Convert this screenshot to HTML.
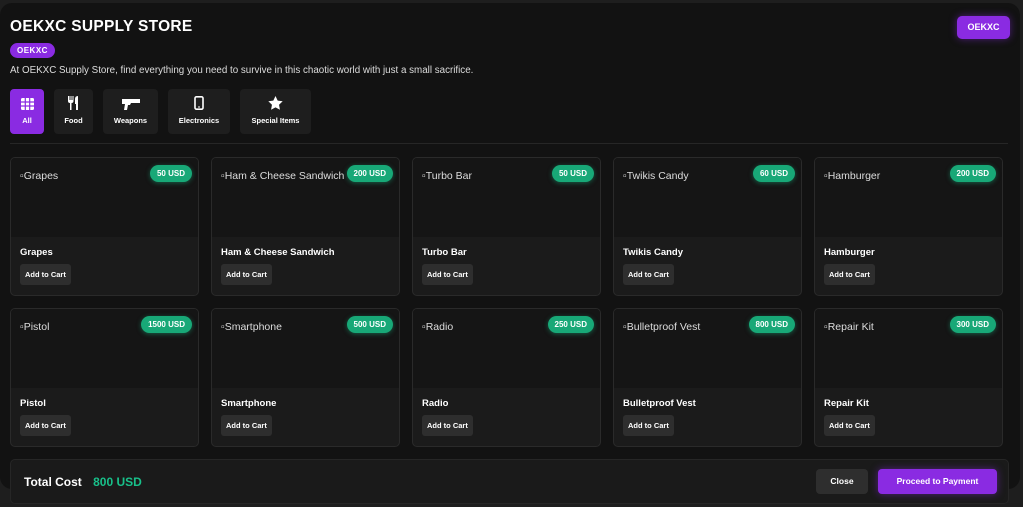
<!DOCTYPE html>
<html><head><meta charset="utf-8"><style>
*{box-sizing:border-box;margin:0;padding:0}
body{width:1023px;height:507px;background:#1e1e1e;font-family:"Liberation Sans",sans-serif;color:#fff;position:relative;overflow:hidden}
.wrap{position:absolute;left:0;top:3px;width:1020px;height:486px;background:#121212;border-radius:12px}
h1{position:absolute;left:10px;top:18px;font-size:15.5px;font-weight:900;letter-spacing:.3px}
.tag{position:absolute;left:10px;top:43px;background:#8a2be2;border-radius:8px;font-size:8px;font-weight:bold;padding:3px 7px;letter-spacing:.5px}
.desc{position:absolute;left:10px;top:65px;font-size:9.8px;color:#ddd}
.top{position:absolute;left:957px;top:16px;width:53px;height:23px;background:#8a2be2;border-radius:5px;font-size:9px;font-weight:bold;text-align:center;line-height:23px;box-shadow:0 0 8px rgba(138,43,226,.5)}
.tabs{position:absolute;top:89px;left:10px;display:flex}
.tab{height:45px;background:#1e1e1e;border-radius:4px;margin-right:10px;font-size:7.5px;font-weight:bold;display:flex;flex-direction:column;align-items:center;justify-content:flex-end;padding-bottom:9px}
.tab svg{margin-bottom:6px}
.tab.on{background:#8a2be2}
hr{position:absolute;left:10px;top:143px;width:998px;border:0;border-top:1px solid #262626}
.card{position:absolute;width:189px;height:139px;border:1px solid #2a2a2a;border-radius:5px;background:#1b1b1b;overflow:hidden}
.img{height:79px;background:#151515;padding:12px 9px;font-size:10.5px;color:#ddd;white-space:nowrap;overflow:hidden}
.price{position:absolute;right:6px;top:7px;background:#18a877;border-radius:9px;font-size:8px;font-weight:bold;padding:4px 7px;box-shadow:0 1px 5px rgba(24,168,119,.5)}
.nm{font-size:9.5px;font-weight:bold;margin:10px 0 0 9px}
.btn{display:inline-block;margin:6px 0 0 9px;background:#2e2e2e;border-radius:3px;font-size:7.5px;font-weight:bold;padding:6px 5px}
.foot{position:absolute;left:10px;top:459px;width:999px;height:45px;background:#1a1a1a;border:1px solid #262626;border-radius:5px}
.tc{position:absolute;left:13px;top:15px;font-size:12px;font-weight:bold}
.tc b{color:#18c08a;margin-left:8px}
.cl{position:absolute;left:805px;top:9px;width:52px;height:25px;background:#2e2e2e;border-radius:4px;font-size:8.5px;font-weight:bold;text-align:center;line-height:25px}
.pp{position:absolute;left:867px;top:9px;width:119px;height:25px;background:#8a2be2;border-radius:4px;font-size:8.5px;font-weight:bold;text-align:center;line-height:25px;box-shadow:0 0 8px rgba(138,43,226,.5)}
</style></head><body>
<div class="wrap"></div>
<h1>OEKXC SUPPLY STORE</h1>
<div class="tag">OEKXC</div>
<div class="desc">At OEKXC Supply Store, find everything you need to survive in this chaotic world with just a small sacrifice.</div>
<div class="top">OEKXC</div>
<div class="tabs">
<div class="tab on" style="width:34px"><svg width="13" height="12" viewBox="0 0 13 12"><rect x="0" y="0" width="13" height="12" rx="1.5" fill="#fff"/><path d="M4.3 0v12M8.7 0v12M0 4h13M0 8h13" stroke="#8a2be2" stroke-width="1.2"/></svg>All</div>
<div class="tab" style="width:39px"><svg width="13" height="14" viewBox="0 0 13 14"><path d="M1 0v5q0 2 2 2v7h1.5V7q2 0 2-2V0H5.5v4H4.5V0h-1v4h-1V0z M9 14V8H8V3q0-3 3-3v14z" fill="#fff"/></svg>Food</div>
<div class="tab" style="width:55px"><svg width="18" height="12" viewBox="0 0 18 12"><path d="M0 1h18v4H9l-1 2H6l-1 5H2l1-6H0z" fill="#fff"/></svg>Weapons</div>
<div class="tab" style="width:62px"><svg width="10" height="14" viewBox="0 0 10 14"><rect x="1" y="0.8" width="8" height="12.4" rx="1.5" fill="none" stroke="#fff" stroke-width="1.6"/><rect x="4" y="10.5" width="2" height="1" fill="#fff"/></svg>Electronics</div>
<div class="tab" style="width:71px"><svg width="15" height="14" viewBox="0 0 24 23"><path d="M12 0l3.6 7.5 8.2 1.1-6 5.7 1.5 8.2L12 18.6 4.7 22.5l1.5-8.2-6-5.7 8.2-1.1z" fill="#fff"/></svg>Special Items</div>
</div>
<hr>
<div class="card" style="left:10px;top:157px"><div class="img">▫Grapes</div><div class="price">50 USD</div><div class="nm">Grapes</div><div class="btn">Add to Cart</div></div>
<div class="card" style="left:211px;top:157px"><div class="img">▫Ham &amp; Cheese Sandwich</div><div class="price">200 USD</div><div class="nm">Ham &amp; Cheese Sandwich</div><div class="btn">Add to Cart</div></div>
<div class="card" style="left:412px;top:157px"><div class="img">▫Turbo Bar</div><div class="price">50 USD</div><div class="nm">Turbo Bar</div><div class="btn">Add to Cart</div></div>
<div class="card" style="left:613px;top:157px"><div class="img">▫Twikis Candy</div><div class="price">60 USD</div><div class="nm">Twikis Candy</div><div class="btn">Add to Cart</div></div>
<div class="card" style="left:814px;top:157px"><div class="img">▫Hamburger</div><div class="price">200 USD</div><div class="nm">Hamburger</div><div class="btn">Add to Cart</div></div>
<div class="card" style="left:10px;top:308px"><div class="img">▫Pistol</div><div class="price">1500 USD</div><div class="nm">Pistol</div><div class="btn">Add to Cart</div></div>
<div class="card" style="left:211px;top:308px"><div class="img">▫Smartphone</div><div class="price">500 USD</div><div class="nm">Smartphone</div><div class="btn">Add to Cart</div></div>
<div class="card" style="left:412px;top:308px"><div class="img">▫Radio</div><div class="price">250 USD</div><div class="nm">Radio</div><div class="btn">Add to Cart</div></div>
<div class="card" style="left:613px;top:308px"><div class="img">▫Bulletproof Vest</div><div class="price">800 USD</div><div class="nm">Bulletproof Vest</div><div class="btn">Add to Cart</div></div>
<div class="card" style="left:814px;top:308px"><div class="img">▫Repair Kit</div><div class="price">300 USD</div><div class="nm">Repair Kit</div><div class="btn">Add to Cart</div></div>
<div class="foot"><div class="tc">Total Cost <b>800 USD</b></div><div class="cl">Close</div><div class="pp">Proceed to Payment</div></div>
</body></html>
